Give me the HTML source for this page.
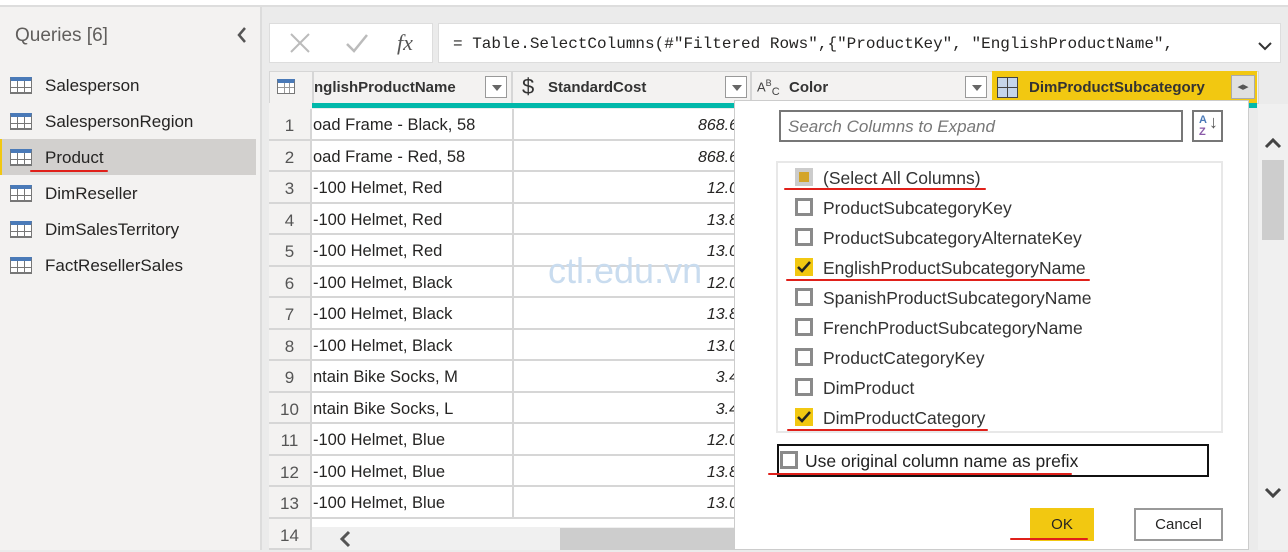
<!DOCTYPE html>
<html><head><meta charset="utf-8"><style>
*{box-sizing:border-box;margin:0;padding:0}
body{width:1288px;height:550px;overflow:hidden;position:relative;background:#ebebeb;font-family:"Liberation Sans",sans-serif;color:#252423}
.a{position:absolute}
.qi{position:absolute;left:0;width:256px;height:36px;font-size:17px;line-height:38px;padding-left:45px}
.ti{position:absolute;left:10px;top:10px;width:22px;height:17px;border:1px solid #777;background:
linear-gradient(#777,#777) 0 6px/100% 1px no-repeat,linear-gradient(#777,#777) 0 11px/100% 1px no-repeat,
linear-gradient(#777,#777) 6px 0/1px 100% no-repeat,linear-gradient(#777,#777) 13px 0/1px 100% no-repeat,#fff;border-top:4px solid #4a7ab8}
.row{position:absolute;left:269px;width:466px;height:31.5px;background:#fff;border-bottom:2px solid #d6d6d6;font-size:16px}
.rn{position:absolute;left:0;top:0;width:43px;height:100%;background:#f3f2f1;border-right:2px solid #d6d6d6;text-align:center;line-height:33px;color:#555;font-size:17px}
.c1{position:absolute;left:44px;line-height:33px;font-size:16.5px}
.c2{position:absolute;left:243px;top:0;height:100%;border-left:2px solid #d6d6d6;width:230px;text-align:right;font-style:italic;line-height:33px;padding-right:4px}
.it{position:absolute;left:795px;font-size:17.5px;height:30px;line-height:32px;padding-left:28px;color:#333}
.cb{position:absolute;left:0;top:6px;width:18px;height:18px;border:3px solid #8a8a8a;background:#fff}
.ck{background:#f2c811;border:none}
.red{position:absolute;height:2px;background:#e0201a;border-radius:1px}
.dd{position:absolute;width:22px;height:22px;border:1px solid #999;background:#fff}
.dd:after{content:"";position:absolute;left:6px;top:8px;border:5px solid transparent;border-top:6px solid #666}
</style></head><body>
<div class="a" style="left:0;top:0;width:1288px;height:7px;background:#fff;border-bottom:2px solid #ddd"></div>
<!-- left panel -->
<div class="a" style="left:0;top:7px;width:262px;height:543px;background:#f3f2f1;border-right:2px solid #dcdcdc"></div>
<div class="a" style="left:15px;top:25px;font-size:19px;color:#605e5c">Queries [6]</div>
<svg class="a" style="left:236px;top:26px" width="12" height="18"><path d="M9 2 L3 9 L9 16" stroke="#555" stroke-width="2.5" fill="none"/></svg>
<div class="qi" style="top:67px"><div class="ti"></div>Salesperson</div>
<div class="qi" style="top:103px"><div class="ti"></div>SalespersonRegion</div>
<div class="qi" style="top:139px;background:#d2d0ce;border-left:2px solid #f2c811;padding-left:43px"><div class="ti" style="left:8px"></div>Product</div>
<div class="red" style="left:30px;top:170px;width:78px"></div>
<div class="qi" style="top:175px"><div class="ti"></div>DimReseller</div>
<div class="qi" style="top:211px"><div class="ti"></div>DimSalesTerritory</div>
<div class="qi" style="top:247px"><div class="ti"></div>FactResellerSales</div>
<!-- formula bar -->
<div class="a" style="left:269px;top:23px;width:164px;height:40px;background:#fff;border:1px solid #ddd"></div>
<svg class="a" style="left:289px;top:32px" width="22" height="22"><path d="M2 2 L20 20 M20 2 L2 20" stroke="#bbb" stroke-width="2"/></svg>
<svg class="a" style="left:345px;top:32px" width="24" height="22"><path d="M2 12 L9 19 L22 3" stroke="#bbb" stroke-width="2.5" fill="none"/></svg>
<div class="a" style="left:397px;top:30px;font-size:22px;color:#555;font-style:italic;font-family:'Liberation Serif',serif">fx</div>
<div class="a" style="left:438px;top:23px;width:843px;height:40px;background:#fff;border:1px solid #ddd;font-family:'Liberation Mono',monospace;font-size:16px;line-height:40px;padding-left:14px;white-space:nowrap;overflow:hidden">= Table.SelectColumns(#"Filtered Rows",{"ProductKey", "EnglishProductName",</div>
<svg class="a" style="left:1257px;top:40px" width="16" height="12"><path d="M2 3 L8 9 L14 3" stroke="#333" stroke-width="2" fill="none"/></svg>
<!-- header -->
<div class="a" style="left:269px;top:71px;width:990px;height:33px;background:#f3f2f1;border:1px solid #d6d6d6"></div>
<div class="a" style="left:277px;top:79px;width:18px;height:15px;border:1px solid #777;border-top:4px solid #4a7ab8;background:linear-gradient(#999,#999) 0 4px/100% 1px no-repeat,linear-gradient(#999,#999) 6px 0/1px 100% no-repeat,linear-gradient(#999,#999) 11px 0/1px 100% no-repeat,#fff"></div>
<div class="a" style="left:312px;top:71px;width:2px;height:33px;background:#d6d6d6"></div>
<div class="a" style="left:314px;top:79px;font-size:15px;font-weight:bold;color:#333">nglishProductName</div>
<div class="dd" style="left:485px;top:76px"></div>
<div class="a" style="left:511px;top:71px;width:2px;height:33px;background:#d6d6d6"></div>
<div class="a" style="left:522px;top:74px;font-size:22px;color:#333">$</div>
<div class="a" style="left:548px;top:79px;font-size:15px;font-weight:bold;color:#333">StandardCost</div>
<div class="dd" style="left:725px;top:76px"></div>
<div class="a" style="left:750px;top:71px;width:2px;height:33px;background:#d6d6d6"></div>
<div class="a" style="left:757px;top:78px;font-size:13px;color:#444">A<sup style="font-size:9px">B</sup><sub style="font-size:11px">C</sub></div>
<div class="a" style="left:789px;top:79px;font-size:15px;font-weight:bold;color:#333">Color</div>
<div class="dd" style="left:965px;top:76px"></div>
<div class="a" style="left:992px;top:71px;width:265px;height:32px;background:#f2c811"></div>
<div class="a" style="left:997px;top:77px;width:21px;height:21px;border:1px solid #444;background:linear-gradient(#444,#444) 0 9px/100% 1px no-repeat,linear-gradient(#444,#444) 9px 0/1px 100% no-repeat,#c5d5ea"></div>
<div class="a" style="left:1029px;top:79px;font-size:15px;font-weight:bold;color:#333">DimProductSubcategory</div>
<div class="a" style="left:1231px;top:75px;width:24px;height:24px;background:#e0e0e0;border:1px solid #aaa;font-size:11px;text-align:center;line-height:22px;color:#555">◂▸</div>
<div class="a" style="left:312px;top:103px;width:945px;height:5px;background:#01b8aa"></div>
<div class="a" style="left:269px;top:103px;width:43px;height:6px;background:#f3f2f1"></div>
<!-- rows -->
<div class="row" style="top:109px"><div class="rn">1</div><div class="c1">oad Frame - Black, 58</div><div class="c2">868.6</div></div>
<div class="row" style="top:140.5px"><div class="rn">2</div><div class="c1">oad Frame - Red, 58</div><div class="c2">868.6</div></div>
<div class="row" style="top:172px"><div class="rn">3</div><div class="c1">-100 Helmet, Red</div><div class="c2">12.0</div></div>
<div class="row" style="top:203.5px"><div class="rn">4</div><div class="c1">-100 Helmet, Red</div><div class="c2">13.8</div></div>
<div class="row" style="top:235px"><div class="rn">5</div><div class="c1">-100 Helmet, Red</div><div class="c2">13.0</div></div>
<div class="row" style="top:266.5px"><div class="rn">6</div><div class="c1">-100 Helmet, Black</div><div class="c2">12.0</div></div>
<div class="row" style="top:298px"><div class="rn">7</div><div class="c1">-100 Helmet, Black</div><div class="c2">13.8</div></div>
<div class="row" style="top:329.5px"><div class="rn">8</div><div class="c1">-100 Helmet, Black</div><div class="c2">13.0</div></div>
<div class="row" style="top:361px"><div class="rn">9</div><div class="c1">ntain Bike Socks, M</div><div class="c2">3.4</div></div>
<div class="row" style="top:392.5px"><div class="rn">10</div><div class="c1">ntain Bike Socks, L</div><div class="c2">3.4</div></div>
<div class="row" style="top:424px"><div class="rn">11</div><div class="c1">-100 Helmet, Blue</div><div class="c2">12.0</div></div>
<div class="row" style="top:455.5px"><div class="rn">12</div><div class="c1">-100 Helmet, Blue</div><div class="c2">13.8</div></div>
<div class="row" style="top:487px"><div class="rn">13</div><div class="c1">-100 Helmet, Blue</div><div class="c2">13.0</div></div>
<div class="row" style="top:518.5px"><div class="rn">14</div></div>
<div class="a" style="left:312px;top:527px;width:423px;height:23px;background:#f0f0f0"></div>
<div class="a" style="left:560px;top:528px;width:175px;height:22px;background:#cdcdcd"></div>
<svg class="a" style="left:338px;top:530px" width="14" height="18"><path d="M11 2 L4 9 L11 16" stroke="#555" stroke-width="3" fill="none"/></svg>
<div class="a" style="left:548px;top:250px;font-size:36px;color:#c9dcef">ctl.edu.vn</div>
<!-- right scrollbar -->
<div class="a" style="left:1258px;top:104px;width:30px;height:446px;background:#f0f0f0"></div>
<div class="a" style="left:1262px;top:160px;width:22px;height:80px;background:#cdcdcd"></div>
<svg class="a" style="left:1264px;top:136px" width="18" height="14"><path d="M2 11 L9 4 L16 11" stroke="#444" stroke-width="3" fill="none"/></svg>
<svg class="a" style="left:1264px;top:486px" width="18" height="14"><path d="M2 3 L9 10 L16 3" stroke="#444" stroke-width="3" fill="none"/></svg>
<!-- dialog -->
<div class="a" style="left:734px;top:100px;width:515px;height:450px;background:#fff;border:1px solid #ccc"></div>
<div class="a" style="left:779px;top:110px;width:404px;height:32px;border:2px solid #777;font-size:17px;font-style:italic;color:#777;line-height:30px;padding-left:7px">Search Columns to Expand</div>
<div class="a" style="left:1192px;top:110px;width:31px;height:32px;border:2px solid #777;font-size:11px;font-weight:bold;line-height:12px;padding:2px 0 0 5px"><span style="color:#4a7ab8">A</span><br><span style="color:#8a5aa8">Z</span><span class="a" style="left:15px;top:4px;font-size:18px;color:#555;font-weight:normal">&#8595;</span></div>
<div class="a" style="left:776px;top:161px;width:447px;height:272px;border:2px solid #e8e8e8"></div>
<div class="it" style="top:162px"><div class="cb" style="border-color:#ccc;background:#d4a52a;border-width:4px"></div>(Select All Columns)</div>
<div class="it" style="top:192px"><div class="cb"></div>ProductSubcategoryKey</div>
<div class="it" style="top:222px"><div class="cb"></div>ProductSubcategoryAlternateKey</div>
<div class="it" style="top:252px"><div class="cb ck"></div><svg class="a" style="left:2px;top:9px" width="14" height="12"><path d="M1 6 L5 10 L13 1" stroke="#222" stroke-width="2.5" fill="none"/></svg>EnglishProductSubcategoryName</div>
<div class="it" style="top:282px"><div class="cb"></div>SpanishProductSubcategoryName</div>
<div class="it" style="top:312px"><div class="cb"></div>FrenchProductSubcategoryName</div>
<div class="it" style="top:342px"><div class="cb"></div>ProductCategoryKey</div>
<div class="it" style="top:372px"><div class="cb"></div>DimProduct</div>
<div class="it" style="top:402px"><div class="cb ck"></div><svg class="a" style="left:2px;top:9px" width="14" height="12"><path d="M1 6 L5 10 L13 1" stroke="#222" stroke-width="2.5" fill="none"/></svg>DimProductCategory</div>
<div class="red" style="left:784px;top:188px;width:202px"></div>
<div class="red" style="left:786px;top:279px;width:304px"></div>
<div class="red" style="left:787px;top:429px;width:201px"></div>
<div class="a" style="left:777px;top:444px;width:432px;height:33px;border:2px solid #111"></div>
<div class="a" style="left:780px;top:451px;width:18px;height:18px;border:3px solid #8a8a8a;background:#fff"></div>
<div class="a" style="left:805px;top:451px;font-size:17.5px;color:#222">Use original column name as prefix</div>
<div class="red" style="left:768px;top:473px;width:304px"></div>
<div class="a" style="left:1030px;top:508px;width:64px;height:33px;background:#f2c811;text-align:center;line-height:33px;font-size:15px">OK</div>
<div class="red" style="left:1010px;top:538px;width:78px"></div>
<div class="a" style="left:1134px;top:508px;width:89px;height:33px;border:2px solid #999;text-align:center;line-height:29px;font-size:15px">Cancel</div>
</body></html>
